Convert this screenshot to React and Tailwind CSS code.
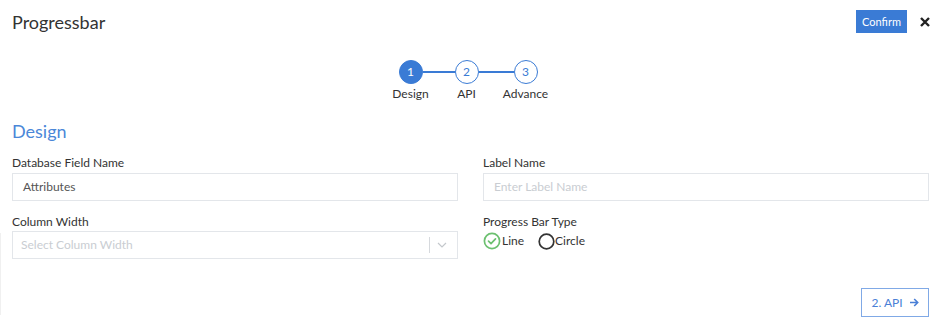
import React from "react";

function Step({ n, label, active }) {
  return (
    <div className="flex flex-col items-center w-6">
      <div
        className={
          "w-6 h-6 rounded-full flex items-center justify-center text-[12px] leading-none " +
          (active
            ? "bg-[#3a7bd5] text-white border border-[#3a7bd5]"
            : "bg-white text-[#3a7bd5] border border-[#3a7bd5]")
        }
      >
        {n}
      </div>
      <div className="mt-[2px] text-[12px] leading-[15px] text-[#333] whitespace-nowrap">{label}</div>
    </div>
  );
}

export default function App() {
  return (
    <div
      className="w-[942px] h-[329px] bg-white relative overflow-hidden"
      style={{ fontFamily: "Lato, 'Open Sans', sans-serif" }}
    >
      <div className="absolute left-0 top-[233px] h-[82px] w-px bg-[#f0f0f0]" />
      {/* Header */}
      <div className="flex items-start justify-between pl-3 pr-3 pt-[10px]">
        <div className="text-[18px] leading-[22px] text-[#333] pt-[1px]">Progressbar</div>
        <div className="flex items-center">
          <button className="h-[23px] w-[51px] bg-[#3a7bd5] text-white text-[11px] leading-none flex items-center justify-center">
            Confirm
          </button>
          <svg className="ml-[13px] mr-[0px]" width="10" height="10" viewBox="0 0 10 10">
            <path d="M1 1 L9 9 M9 1 L1 9" stroke="#222" strokeWidth="2.4" strokeLinecap="butt" />
          </svg>
        </div>
      </div>

      {/* Stepper */}
      <div className="flex justify-center mt-[27px] pr-[6px]">
        <div className="flex items-start">
          <Step n="1" label="Design" active />
          <div className="w-8 h-[2px] bg-[#3a7bd5] mt-[11px]" />
          <Step n="2" label="API" />
          <div className="w-[35px] h-[2px] bg-[#3a7bd5] mt-[11px]" />
          <Step n="3" label="Advance" />
        </div>
      </div>

      {/* Design */}
      <div className="pl-3 pr-[13px] mt-[19px]">
        <div className="text-[18px] leading-[22px] text-[#4b87d8]">Design</div>
        <div className="grid grid-cols-2 gap-x-[25px] mt-[13px]">
          <div>
            <div className="text-[12px] leading-[15px] text-[#333]">Database Field Name</div>
            <div className="mt-[3px] h-[28px] border border-[#e3e6ea] flex items-center px-[10px] text-[12px] text-[#555]">
              Attributes
            </div>
          </div>
          <div>
            <div className="text-[12px] leading-[15px] text-[#333]">Label Name</div>
            <div className="mt-[3px] h-[28px] border border-[#e3e6ea] flex items-center px-[10px] text-[12px] text-[#c9cdd2]">
              Enter Label Name
            </div>
          </div>
          <div className="mt-[13px]">
            <div className="text-[12px] leading-[15px] text-[#333]">Column Width</div>
            <div className="mt-[2px] h-[28px] border border-[#e3e6ea] flex items-center pl-[8px] pr-[10px] text-[12px] text-[#c9cdd2]">
              <span className="flex-1">Select Column Width</span>
              <span className="w-px h-[16px] bg-[#d6d9dd] mr-[7px]" />
              <svg width="10" height="6" viewBox="0 0 10 6">
                <path d="M1 1 L5 5 L9 1" stroke="#c4c8cc" strokeWidth="1.2" fill="none" />
              </svg>
            </div>
          </div>
          <div className="mt-[13px]">
            <div className="text-[12px] leading-[15px] text-[#333]">Progress Bar Type</div>
            <div className="flex items-center mt-[3px] text-[12px] text-[#333]">
              <svg width="18" height="18" viewBox="0 0 18 18" className="mr-[1px]">
                <circle cx="9" cy="9" r="7.6" stroke="#6cc070" strokeWidth="1.7" fill="none" />
                <path d="M5.5 9.2 L8 11.6 L12.5 6.8" stroke="#6cc070" strokeWidth="1.7" fill="none" strokeLinecap="round" strokeLinejoin="round" />
              </svg>
              <span>Line</span>
              <svg width="17" height="17" viewBox="0 0 17 17" className="ml-[14px]">
                <circle cx="8.5" cy="8.5" r="7.3" stroke="#333" strokeWidth="1.7" fill="none" />
              </svg>
              <span>Circle</span>
            </div>
          </div>
        </div>
        <div className="flex justify-end mt-[29px]">
          <button className="h-[29px] w-[68px] border border-[#80a9e6] text-[#4a7fd6] text-[12px] flex items-center justify-center gap-[6px]">
            <span>2. API</span>
            <svg width="10" height="9" viewBox="0 0 10 9">
              <path d="M1 4.5 H8.5 M5.2 1 L8.7 4.5 L5.2 8" stroke="#4a7fd6" strokeWidth="1.6" fill="none" />
            </svg>
          </button>
        </div>
      </div>
    </div>
  );
}
